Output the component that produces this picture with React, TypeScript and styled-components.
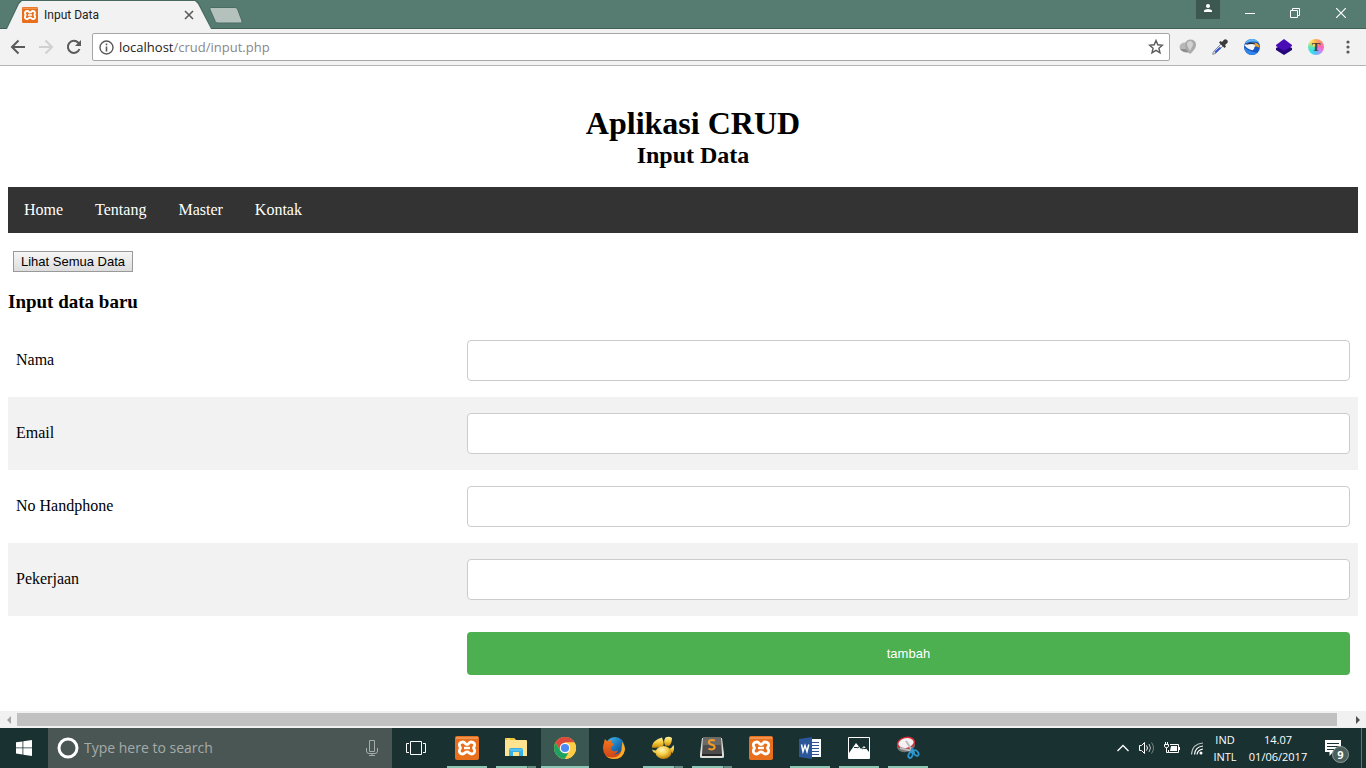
import React from "react";
import styled, { createGlobalStyle, css } from "styled-components";

const GlobalStyle = createGlobalStyle`
  *, *::before, *::after { box-sizing: border-box; }
  body { margin: 0; background: #fff; }
  button, input { font: inherit; }
  svg { display: block; flex: none; }
`;

const uiFont = `"Open Sans", "Noto Sans", sans-serif`;

const Screen = styled.div`
  display: flex;
  flex-direction: column;
  min-height: 100vh;
`;

/* ---------- browser frame ---------- */

const TitleBar = styled.header`
  display: flex;
  align-items: flex-start;
  height: 29px;
  padding-left: 6px;
  background: #567c72;
  border-bottom: 1px solid #3f5f57;
`;

const Tab = styled.div`
  position: relative;
  z-index: 0;
  display: flex;
  align-items: center;
  width: 206px;
  height: 29px;
  padding: 0 15px 0 16px;
  font: 12px/16px Roboto, sans-serif;
  color: #222;

  &::before,
  &::after {
    content: "";
    position: absolute;
    z-index: -1;
    inset: 0;
    background: #48695f;
    clip-path: polygon(0 100%, 12px 3px, 15px 0, 190px 0, 193px 3px, 100% 100%);
  }
  &::after {
    background: #f2f2f2;
    clip-path: polygon(1px 100%, 13px 4px, 16px 1px, 189px 1px, 192px 4px, 205px 100%);
  }
`;

const TabTitle = styled.span`
  flex: 1;
  margin-left: 6px;
`;

const IconButton = styled.button<{ $w?: number; $h?: number }>`
  display: flex;
  align-items: center;
  justify-content: center;
  flex: none;
  width: ${(p) => p.$w ?? 28}px;
  height: ${(p) => p.$h ?? 28}px;
  padding: 0;
  border: 0;
  background: transparent;
  color: inherit;
`;

const NewTab = styled.button`
  width: 34px;
  height: 17px;
  margin-top: 7px;
  margin-left: -3px;
  padding: 0;
  border: 0;
  background: transparent;
`;

const WindowControls = styled.div`
  display: flex;
  margin-left: auto;
  padding-right: 2px;
  color: #fff;
`;

const Profile = styled.button`
  display: flex;
  justify-content: center;
  width: 24px;
  height: 19px;
  margin-right: 7px;
  padding: 4px 0 0;
  border: 0;
  background: #3d5850;
`;

const Toolbar = styled.div`
  display: flex;
  align-items: center;
  height: 37px;
  padding: 0 2px 0 4px;
  background: #f2f2f2;
  border-bottom: 1px solid #b4b4b4;
  color: #5a5a5a;
`;

const AddressBar = styled.div`
  display: flex;
  align-items: center;
  flex: 1;
  height: 28px;
  margin: 0 2px 0 4px;
  padding: 0 0 0 6px;
  background: #fff;
  border: 1px solid #a6a6a6;
  border-radius: 2px;
`;

const Url = styled.div`
  flex: 1;
  margin-left: 5px;
  font: 13px/20px ${uiFont};
  color: #888;

  b { font-weight: 400; color: #222; }
`;

const ScrollBar = styled.div`
  display: flex;
  align-items: center;
  height: 17px;
  background: #f1f1f1;
  color: #505050;
`;

const ScrollThumb = styled.div`
  flex: 1;
  height: 13px;
  margin-right: 12px;
  background: #c1c1c1;
`;

/* ---------- web page ---------- */

const Page = styled.main`
  flex: 1;
  padding: 40px 8px 20px;
  font: 16px/18px "Liberation Serif", serif;
  color: #000;
`;

const Heading = styled.div`
  padding-left: 20px;
  text-align: center;
`;

const H1 = styled.h1`
  margin: 0;
  font-size: 32px;
  line-height: 34px;
`;

const H2 = styled.h2`
  margin: 0;
  font-size: 24px;
  line-height: 30px;
`;

const Menu = styled.nav`
  display: flex;
  margin-top: 17px;
  background: #333;
`;

const MenuLink = styled.a`
  padding: 14px 16px;
  color: #fff;
  text-decoration: none;
`;

const PlainButton = styled.button`
  display: block;
  height: 21px;
  margin: 18px 5px 20px;
  padding: 0 7px;
  border: 1px solid #999;
  background: linear-gradient(#f6f6f6, #dddddd);
  font: 13px/17px "Liberation Sans", sans-serif;
  color: #000;
`;

const H3 = styled.h3`
  margin: 0 0 12px;
  font-size: 19px;
  line-height: 20px;
`;

const FormTable = styled.table`
  width: 100%;
  table-layout: fixed;
  border-collapse: collapse;

  tr:nth-child(even) { background: #f2f2f2; }
`;

const LabelCell = styled.th`
  width: 33.4%;
  padding: 8px 8px 10px;
  text-align: left;
  font-weight: 400;
`;

const FieldCell = styled.td`
  padding: 8px;
`;

const TextField = styled.input`
  display: block;
  width: 100%;
  height: 41px;
  margin: 8px 0;
  padding: 12px 20px;
  border: 1px solid #ccc;
  border-radius: 4px;
  background: #fff;
`;

const SubmitButton = styled.button`
  display: block;
  width: 100%;
  height: 43px;
  margin: 8px 0;
  padding: 0;
  border: 0;
  border-radius: 4px;
  background: #4caf50;
  font: 13px/15px "Liberation Sans", sans-serif;
  color: #fff;
`;

/* ---------- taskbar ---------- */

const Taskbar = styled.footer`
  display: flex;
  align-items: stretch;
  height: 40px;
  background: #1a3131;
  color: #fff;
`;

const Search = styled.label`
  display: flex;
  align-items: center;
  flex: 0 1 344px;
  padding: 0 14px 0 9px;
  background: #4a5653;
`;

const SearchInput = styled.input`
  flex: 1;
  min-width: 0;
  margin-left: 5px;
  padding: 0;
  border: 0;
  background: transparent;
  font: 14px/20px ${uiFont};
  color: #fff;

  &::placeholder { color: #a5abaa; opacity: 1; }
`;

const Apps = styled.div`
  display: flex;
  gap: 1px;
  margin-left: 3px;
`;

type Mark = "none" | "open" | "stacked" | "active";

const AppButton = styled.button<{ $mark: Mark }>`
  position: relative;
  display: flex;
  align-items: center;
  justify-content: center;
  width: 48px;
  padding: 0;
  border: 0;
  background: ${(p) => (p.$mark === "active" ? "#3b5752" : "transparent")};

  ${(p) =>
    p.$mark !== "none" &&
    css`
      &::after {
        content: "";
        position: absolute;
        bottom: 0;
        left: ${p.$mark === "active" ? 0 : 4}px;
        right: ${p.$mark === "active" ? 0 : 4}px;
        height: 2px;
        background: ${p.$mark === "stacked"
          ? "linear-gradient(90deg, #8cc5b4 31px, #49685f 31px, #49685f 32px, #648c80 32px)"
          : "#8cc5b4"};
      }
    `}
`;

const Tray = styled.div`
  display: flex;
  align-items: center;
  margin-left: auto;
  font: 11px/17px ${uiFont};
  text-align: center;
`;

const TrayText = styled.div<{ $w: number }>`
  width: ${(p) => p.$w}px;
  white-space: nowrap;
`;

const Notifications = styled(IconButton)`
  position: relative;
  margin-right: 12px;
`;

const Badge = styled.span`
  position: absolute;
  top: 18px;
  right: 0;
  width: 17px;
  height: 17px;
  border: 1px solid #8d9b99;
  border-radius: 50%;
  background: #4b5f5d;
  font: 700 11px/15px ${uiFont};
`;

const ShowDesktop = styled.button`
  width: 5px;
  height: 40px;
  padding: 0;
  border: 0;
  border-left: 1px solid #65716f;
  background: transparent;
`;

/* ---------- drawings ---------- */

const Xampp = ({ size }: { size: number }) => (
  <svg width={size} height={size} viewBox="0 0 24 24">
    <rect width="24" height="24" rx="2" fill="#e8701c" />
    <path d="M1 1h22v2H1z" fill="#f3a264" opacity=".7" />
    <path
      d="M8 6C5 6 4 8 4.500 9.800 4.800 11 5.500 11.300 5.500 12s-.8 1-1.100 2.200C4 16.500 5.300 18 7.500 18c2.300 0 2.500-2.200 4.500-2.200s2.200 2.200 4.500 2.200c2.200 0 3.500-1.500 3.100-3.800-.3-1.200-1.100-1.500-1.100-2.200s.7-1 1-2.200C20 8 19 6 16 6c-2.400 0-2 2.500-4 2.500S10.400 6 8 6z"
      fill="none"
      stroke="#fff"
      strokeWidth="2.800"
      strokeLinejoin="round"
    />
    <path d="M9 12h6" stroke="#fff" strokeWidth="2.400" />
  </svg>
);

const Explorer = () => (
  <svg width="22" height="20" viewBox="0 0 22 20">
    <path d="M0 2V1q0-1 1-1h8l2 2h10q1 0 1 1v15H0z" fill="#ffe38e" />
    <path d="M0 2V1q0-1 1-1h8l1 2z" fill="#f0c22e" />
    <path d="M2 1h3" stroke="#fff3c4" />
    <path d="M4 18v-6q0-2 2-2h10q2 0 2 2v6h-4v-4H8v4z" fill="#35b0e8" />
    <path d="M5 12h12" stroke="#7dcff2" />
  </svg>
);

const ChromeLogo = () => (
  <svg width="22" height="22" viewBox="0 0 22 22">
    <circle cx="11" cy="11" r="11" fill="#ffcd45" />
    <path d="M1.500 5.500A11 11 0 0 1 20.600 5.600H11L6.300 13.600z" fill="#dc4a3d" />
    <path d="M1.500 5.500 6.300 13.700 11 16.300h4.700L10.500 22A11 11 0 0 1 1.500 5.500z" fill="#1da261" />
    <path d="M20.600 5.600H11v5l4.700 3L10.900 22A11 11 0 0 0 20.600 5.600z" fill="#ffcd45" />
    <circle cx="11" cy="11" r="5.200" fill="#fff" />
    <circle cx="11" cy="11" r="4.100" fill="#4c8bf5" />
  </svg>
);

const Firefox = () => (
  <svg width="24" height="24" viewBox="0 0 24 24">
    <defs>
      <linearGradient id="globe" x1="0" y1="0" x2="1" y2="1">
        <stop offset="0" stopColor="#45c8f0" />
        <stop offset=".5" stopColor="#1d78bd" />
        <stop offset="1" stopColor="#0a3570" />
      </linearGradient>
      <linearGradient id="fox" x1="0" y1="0" x2="0" y2="1">
        <stop offset="0" stopColor="#ef7a1e" />
        <stop offset="1" stopColor="#cf3f16" />
      </linearGradient>
    </defs>
    <circle cx="13" cy="10.500" r="9.500" fill="url(#globe)" />
    <path
      d="M3 3q1 2 3 2 2-1 4-1-1 2-1 3 2 0 3 1-1 2-3 3-1 3 2 4 3 1 5-1-1 4-5 4 5 1 8-3 1-3 0-6 3 3 3 6-1 8-10 8-11-1-11-11 0-3 1-5 0-2 1-4z"
      fill="url(#fox)"
    />
    <path d="M20 6q3 3 3 8-2 9-11 9-5 0-8-3 7 3 12 0 5-4 4-14z" fill="#f9ae26" />
  </svg>
);

const Navicat = () => (
  <svg width="24" height="24" viewBox="0 0 24 24">
    <defs>
      <linearGradient id="gold" x1="0" y1="0" x2="0" y2="1">
        <stop offset="0" stopColor="#fff0a0" />
        <stop offset=".5" stopColor="#f4cc3c" />
        <stop offset="1" stopColor="#c8860c" />
      </linearGradient>
      <radialGradient id="belly" cx=".4" cy=".3" r=".7">
        <stop offset="0" stopColor="#fff6bd" />
        <stop offset=".5" stopColor="#f6d04a" />
        <stop offset="1" stopColor="#c07c08" />
      </radialGradient>
    </defs>
    <path d="M1 10Q2 4 11 1.500q2 4 1.500 8-5 3-11.500 2z" fill="url(#gold)" />
    <path d="M14 9.500q-2-5 .5-8Q18 0 21 2q0 5-3 8z" fill="url(#gold)" />
    <path d="M18 13q3-1 4.500-4 1.500 4-1 8.500z" fill="url(#gold)" />
    <path d="M1 13.500q3 1.500 6 .5l-1 4q-4-1-5-4.500z" fill="url(#gold)" />
    <ellipse cx="12.500" cy="16.500" rx="8" ry="6.500" fill="url(#belly)" />
  </svg>
);

const Sublime = () => (
  <svg width="24" height="22" viewBox="0 0 24 22">
    <path d="M2 1h20l2 16v3q0 1-2 1H2q-2 0-2-1v-3z" fill="#deded9" />
    <path d="M3 0h18l1 17H2z" fill="#4c4c4c" />
    <path d="M3 0h18v8H3z" fill="#6a6a68" />
    <path d="M2 17h20v2H2z" fill="#262626" />
    <path
      d="M15 3.500q-3-1-5.500 0-1.500 2 .5 3.500l4 1.500q1.500 2-.5 3.500-3 1-5-.5"
      fill="none"
      stroke="#f39b27"
      strokeWidth="2"
    />
  </svg>
);

const Word = () => (
  <svg width="24" height="22" viewBox="0 0 24 22">
    <path d="M11 2h12v18H11z" fill="#fff" />
    <path d="M14 5.500h7M14 8.500h7M14 11.500h7M14 14.500h7M14 17.500h7" stroke="#2b579a" />
    <path d="M1 2 14 0v22L1 20z" fill="#2b579a" />
    <path d="m3.500 7.500 1.500 7 2-6 2 6 1.800-7" fill="none" stroke="#fff" strokeWidth="1.500" />
  </svg>
);

const Photos = () => (
  <svg width="22" height="22" viewBox="0 0 22 22">
    <path d="M.5.5h21v21H.5z" fill="none" stroke="#fff" />
    <path d="M1 16 8 6l5 6 3-3 5 6v6H1z" fill="#fff" />
    <path d="m6 10 1 1 1-1 1 1 2-1M14 12l2-1 1 1 1-1" stroke="#1a3131" fill="none" />
  </svg>
);

const Snip = () => (
  <svg width="24" height="24" viewBox="0 0 24 24">
    <ellipse cx="10" cy="10" rx="9" ry="6" fill="#777" transform="rotate(-12 10 10)" />
    <ellipse cx="10" cy="7" rx="8.500" ry="5.500" fill="#f4f2f2" stroke="#d32b35" strokeWidth="1.500" transform="rotate(-12 10 7)" />
    <path d="m10 5 8 12M4 12l12 3" stroke="#bcbcbc" strokeWidth="2" />
    <g fill="none" stroke="#2b97cf" strokeWidth="1.800">
      <ellipse cx="14.500" cy="19" rx="2" ry="3" transform="rotate(20 14.500 19)" />
      <ellipse cx="20" cy="17" rx="2" ry="3.200" transform="rotate(-38 20 17)" />
      <path d="m15 16 1-3 2 2" />
    </g>
  </svg>
);

const CloudExt = () => (
  <svg width="18" height="16" viewBox="0 0 18 16">
    <ellipse cx="6" cy="8" rx="5.500" ry="4.500" fill="#b8b8b8" />
    <path d="M1 10q4 5 10 3l-4-3z" fill="#8f8f8f" />
    <path d="M6 6q0-5 5-5.500 6 0 6 5.500 0 4-6 9Q6 10 6 6z" fill="#aaa" />
    <path d="M8 6q0-4 3-4 3 0 3 4l-3 6z" fill="#d2d2d2" />
  </svg>
);

const Dropper = () => (
  <svg width="16" height="16" viewBox="0 0 16 16">
    <path d="M9.500 4.500 1.500 12.500l-.8 2.800 2.800-.8 8-8z" fill="#e8ecf8" stroke="#8a8a8a" />
    <path d="m8.500 8.500-5.500 5" stroke="#3557d6" strokeWidth="2" />
    <path d="M7 3.500 8.500 2l1.500 1L12 .8Q13.500-.3 15 1t.3 3L13 6l1 1.500L12.500 9z" fill="#3b3b3b" />
  </svg>
);

const Eagle = () => (
  <svg width="16" height="16" viewBox="0 0 16 16">
    <circle cx="8" cy="8" r="8" fill="#1656c4" />
    <path d="M1 4.500Q3.500 0 8 0q4.500 0 6.500 3.500Q8 1 1 4.500z" fill="#5fb8f5" />
    <path d="M.3 6Q4 3.500 10 3.500l2 3q-2 1-2 3.500-1 1.500-2.500 1Q3 10 .3 6z" fill="#f4f6fa" />
    <path d="M10 3.800q5 0 5.700 5.200Q14 7.200 11 7.200z" fill="#f5a51d" />
    <path d="M2 5q4-2.200 8-1.200l1.500 1.700Q6 4.500 3 5.800z" fill="#27303c" />
    <path d="M.3 8.500Q4 12 9 13l4 .5Q11 16 8 16 1.500 15.500.3 8.500z" fill="#2f86e6" />
  </svg>
);

const Layers = () => (
  <svg width="16" height="16" viewBox="0 0 16 16">
    <path d="m0 9 8-4 8 4v2l-8 5-8-5z" fill="#24087a" />
    <path d="m0 6 8-6 8 6v1l-8 5-8-5z" fill="#4a0cb5" />
  </svg>
);

const RainbowDisc = styled.span`
  display: flex;
  align-items: center;
  justify-content: center;
  width: 16px;
  height: 16px;
  border-radius: 50%;
  background: conic-gradient(#ffad55, #ff8a70, #ff65b8, #c98af5, #5abcf8, #35e2ed, #62e8b1, #ffe15a, #ffad55);
  font: 700 13px/16px "Liberation Serif", serif;
  color: #444;
`;

const Stroke = ({ w, h, d, sw = 1, color = "currentColor" }: { w: number; h: number; d: string; sw?: number; color?: string }) => (
  <svg width={w} height={h} viewBox={`0 0 ${w} ${h}`} fill="none" stroke={color} strokeWidth={sw}>
    <path d={d} />
  </svg>
);

const fields = [
  { id: "nama", label: "Nama" },
  { id: "email", label: "Email" },
  { id: "hp", label: "No Handphone" },
  { id: "pekerjaan", label: "Pekerjaan" },
];

const apps: { name: string; mark: Mark; icon: React.ReactNode }[] = [
  { name: "XAMPP", mark: "open", icon: <Xampp size={24} /> },
  { name: "File Explorer", mark: "stacked", icon: <Explorer /> },
  { name: "Chrome", mark: "active", icon: <ChromeLogo /> },
  { name: "Firefox", mark: "none", icon: <Firefox /> },
  { name: "Navicat", mark: "stacked", icon: <Navicat /> },
  { name: "Sublime Text", mark: "stacked", icon: <Sublime /> },
  { name: "XAMPP Control", mark: "none", icon: <Xampp size={24} /> },
  { name: "Word", mark: "open", icon: <Word /> },
  { name: "Photos", mark: "open", icon: <Photos /> },
  { name: "Snipping Tool", mark: "open", icon: <Snip /> },
];

const extensions = [
  { name: "Cloud", icon: <CloudExt /> },
  { name: "Color picker", icon: <Dropper /> },
  { name: "Eagle", icon: <Eagle /> },
  { name: "Layers", icon: <Layers /> },
  { name: "Type", icon: <RainbowDisc>T</RainbowDisc> },
];

export default function App() {
  return (
    <Screen>
      <GlobalStyle />
      <TitleBar>
        <Tab>
          <Xampp size={16} />
          <TabTitle>Input Data</TabTitle>
          <IconButton $w={16} $h={16} aria-label="Close tab">
            <Stroke w={10} h={10} sw={1.6} color="#5a5a5a" d="m1 1 8 8M9 1 1 9" />
          </IconButton>
        </Tab>
        <NewTab aria-label="New tab">
          <svg width="34" height="17" viewBox="0 0 34 17">
            <path d="M2 .5h24q2 0 2.500 1.500L33 14q.5 2-1.500 2H9q-2 0-2.700-1.500L.8 2Q.5.5 2 .5z" fill="#b4c1bd" stroke="#4a6c62" />
          </svg>
        </NewTab>
        <WindowControls>
          <Profile aria-label="Profile">
            <svg width="8" height="8" viewBox="0 0 8 8" fill="#fff">
              <circle cx="4" cy="2" r="2" />
              <path d="M0 8V6.500Q1 5 4 5t4 1.500V8z" />
            </svg>
          </Profile>
          <IconButton $w={45} $h={26} aria-label="Minimize">
            <Stroke w={10} h={10} d="M0 5.500h10" />
          </IconButton>
          <IconButton $w={46} $h={26} aria-label="Restore">
            <Stroke w={10} h={10} d="M.5 2.500h7v7h-7zM2.500 2.500v-2h7v7h-2" />
          </IconButton>
          <IconButton $w={46} $h={26} aria-label="Close">
            <Stroke w={10} h={10} sw={1.2} d="m0 0 10 10M10 0 0 10" />
          </IconButton>
        </WindowControls>
      </TitleBar>
      <Toolbar>
        <IconButton aria-label="Back">
          <Stroke w={16} h={16} sw={2} d="M15 8H2M8.500 1.500 2 8l6.500 6.500" />
        </IconButton>
        <IconButton aria-label="Forward">
          <Stroke w={16} h={16} sw={2} color="#d0d0d0" d="M1 8h13M7.500 1.500 14 8l-6.500 6.500" />
        </IconButton>
        <IconButton aria-label="Reload">
          <svg width="16" height="16" viewBox="0 0 16 16">
            <path d="M13.500 10A6 6 0 1 1 12.300 3.800L14 5.500" fill="none" stroke="currentColor" strokeWidth="2" />
            <path d="M15 1v6H9z" fill="currentColor" />
          </svg>
        </IconButton>
        <AddressBar>
          <svg width="15" height="15" viewBox="0 0 15 15" fill="none" stroke="currentColor">
            <circle cx="7.500" cy="7.500" r="6.500" strokeWidth="1.400" />
            <path d="M7.500 6.500v5M7.500 3.500v1.700" strokeWidth="1.600" />
          </svg>
          <Url>
            <b>localhost</b>/crud/input.php
          </Url>
          <IconButton $w={26} $h={26} aria-label="Bookmark">
            <Stroke w={16} h={16} sw={1.4} d="m8 1.500 1.800 4.300 4.700.4-3.600 3 1.100 4.600L8 11.400l-4 2.400 1.100-4.600-3.600-3 4.700-.4z" />
          </IconButton>
        </AddressBar>
        {extensions.map((e) => (
          <IconButton key={e.name} $w={32} aria-label={e.name}>
            {e.icon}
          </IconButton>
        ))}
        <IconButton $w={32} aria-label="Menu">
          <svg width="4" height="14" viewBox="0 0 4 14" fill="currentColor">
            <circle cx="2" cy="2" r="1.600" />
            <circle cx="2" cy="7" r="1.600" />
            <circle cx="2" cy="12" r="1.600" />
          </svg>
        </IconButton>
      </Toolbar>

      <Page>
        <Heading>
          <H1>Aplikasi CRUD</H1>
          <H2>Input Data</H2>
        </Heading>
        <Menu>
          <MenuLink href="#home">Home</MenuLink>
          <MenuLink href="#tentang">Tentang</MenuLink>
          <MenuLink href="#master">Master</MenuLink>
          <MenuLink href="#kontak">Kontak</MenuLink>
        </Menu>
        <PlainButton>Lihat Semua Data</PlainButton>
        <H3>Input data baru</H3>
        <form onSubmit={(e) => e.preventDefault()}>
          <FormTable>
            <tbody>
              {fields.map((f) => (
                <tr key={f.id}>
                  <LabelCell scope="row">
                    <label htmlFor={f.id}>{f.label}</label>
                  </LabelCell>
                  <FieldCell>
                    <TextField id={f.id} name={f.id} />
                  </FieldCell>
                </tr>
              ))}
              <tr>
                <FieldCell />
                <FieldCell>
                  <SubmitButton type="submit">tambah</SubmitButton>
                </FieldCell>
              </tr>
            </tbody>
          </FormTable>
        </form>
      </Page>

      <ScrollBar>
        <IconButton $w={17} $h={17} aria-label="Scroll left">
          <svg width="4" height="8" viewBox="0 0 4 8" fill="#a3a3a3">
            <path d="M4 0v8L0 4z" />
          </svg>
        </IconButton>
        <ScrollThumb />
        <IconButton $w={17} $h={17} aria-label="Scroll right">
          <svg width="4" height="8" viewBox="0 0 4 8" fill="currentColor">
            <path d="M0 0v8l4-4z" />
          </svg>
        </IconButton>
      </ScrollBar>

      <Taskbar>
        <IconButton $w={48} $h={40} aria-label="Start">
          <svg width="16" height="16" viewBox="0 0 16 16" fill="#fff">
            <path d="M0 2.300 6.500 1.400v6.100H0zM7.300 1.300 16 0v7.500H7.300zM0 8.300h6.500v6.200L0 13.600zM7.300 8.300H16V16l-8.700-1.300z" />
          </svg>
        </IconButton>
        <Search>
          <svg width="22" height="22" viewBox="0 0 22 22">
            <circle cx="11" cy="11" r="9" fill="none" stroke="#fff" strokeWidth="3" />
          </svg>
          <SearchInput placeholder="Type here to search" aria-label="Search" />
          <Stroke w={12} h={16} color="#a5abaa" d="M3.500.5h5v11h-5zM.5 8v3q0 2.500 2.500 2.500h6q2.500 0 2.500-2.500V8M6 13v2.500M3 15.500h6" />
        </Search>
        <IconButton $w={48} $h={40} aria-label="Task view">
          <Stroke w={20} h={14} d="M4.500.5h11v13h-11zM3 2.500H.5v9H3M17 2.500h2.500v9H17" />
        </IconButton>
        <Apps>
          {apps.map((a) => (
            <AppButton key={a.name} $mark={a.mark} aria-label={a.name}>
              {a.icon}
            </AppButton>
          ))}
        </Apps>
        <Tray>
          <IconButton $w={22} $h={40} aria-label="Hidden icons">
            <Stroke w={12} h={8} sw={1.3} d="m.5 7 5.500-5.500L11.500 7" />
          </IconButton>
          <IconButton $w={25} $h={40} aria-label="Volume">
            <svg width="16" height="14" viewBox="0 0 16 14" fill="none" stroke="#fff">
              <path d="M.5 4.500h2l3-3v11l-3-3h-2z" />
              <path d="M7.500 4.500q2 2.500 0 5" />
              <path d="M10 3q3 4 0 8" opacity=".7" />
              <path d="M12.500 1.500q4 5.500 0 11" opacity=".4" />
            </svg>
          </IconButton>
          <IconButton $w={25} $h={40} aria-label="Battery">
            <svg width="16" height="12" viewBox="0 0 16 12" fill="none" stroke="#fff">
              <path d="M6 2.500h8.500v8h-10V8M15.500 5v3M1.500 0v2M3.500 0v2M.5 2.500h4v2q0 1-2 1t-2-1zM2.500 6v4.500h2" />
              <path d="M7 4h6v5H6z" fill="#fff" stroke="none" />
            </svg>
          </IconButton>
          <IconButton $w={26} $h={40} aria-label="Network">
            <svg width="12" height="13" viewBox="0 0 12 13" fill="none" stroke="#fff" strokeWidth="1.200">
              <path d="M.5 12.500Q1 2 12 1" opacity=".7" />
              <path d="M3.500 12.500Q4 5 12 4M6 12.500Q6.500 8 12 7" />
              <circle cx="10" cy="11" r="1.500" fill="#fff" stroke="none" />
            </svg>
          </IconButton>
          <TrayText $w={30}>
            IND
            <br />
            INTL
          </TrayText>
          <TrayText $w={76}>
            14.07
            <br />
            01/06/2017
          </TrayText>
          <Notifications $w={33} $h={40} aria-label="Notifications">
            <svg width="16" height="16" viewBox="0 0 16 16">
              <path d="M0 0h16v12H8l-3.500 4v-4H0z" fill="#fff" />
              <path d="M2 3.500h12M2 6.500h12M2 9.500h8" stroke="#1a3131" />
            </svg>
            <Badge>9</Badge>
          </Notifications>
          <ShowDesktop aria-label="Show desktop" />
        </Tray>
      </Taskbar>
    </Screen>
  );
}
